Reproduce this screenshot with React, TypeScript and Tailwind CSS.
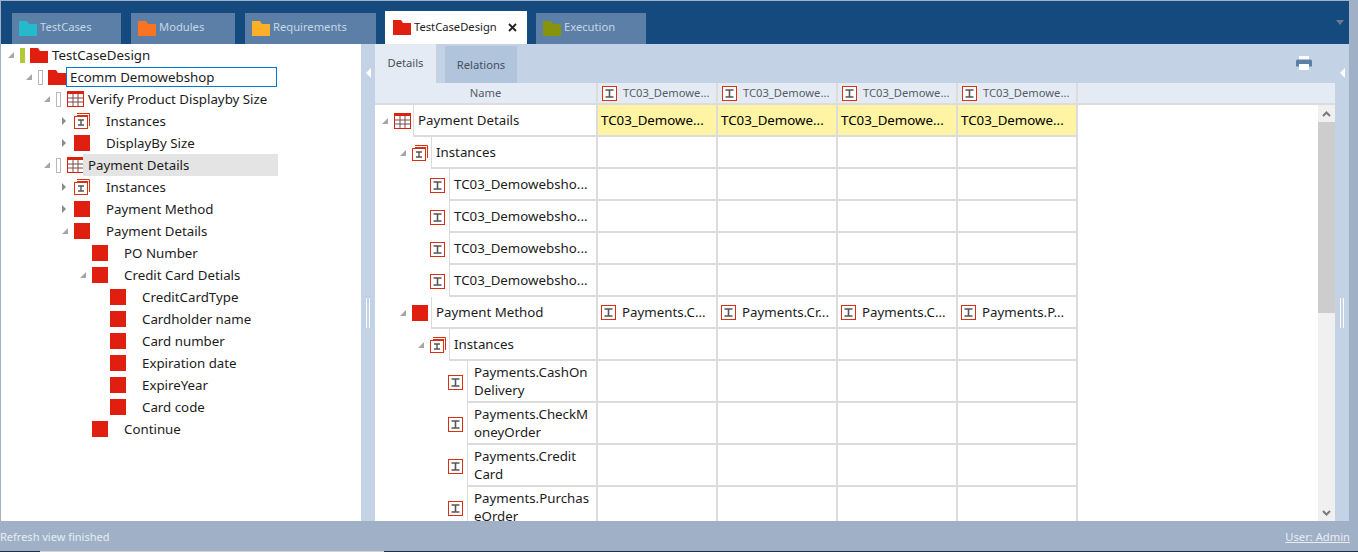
const FONT = "font-['Noto_Sans','Open_Sans',sans-serif]";

function Folder({ color }: { color: string }) {
  return (
    <svg width="18" height="15" viewBox="0 0 18 15" className="shrink-0">
      <path d="M0 0H8L10 3H18V15H0Z" fill={color} />
    </svg>
  );
}

function TableIcon() {
  return (
    <svg width="17" height="16" viewBox="0 0 17 16" className="shrink-0">
      <rect x="0.5" y="0.5" width="16" height="15" fill="#fff" stroke="#d9230f" />
      <rect x="0" y="0" width="17" height="3" fill="#d9230f" />
      <path d="M1 7H16M1 11H16M6 3V15M11 3V15" stroke="#7a4a48" strokeWidth="1" />
    </svg>
  );
}

function SingleIcon() {
  return (
    <svg width="15" height="15" viewBox="0 0 15 15" className="shrink-0">
      <rect x="0.5" y="0.5" width="14" height="14" fill="#fff" stroke="#d9300f" />
      <path d="M3.5 4H11.5M7.5 4V11M3.5 11H11.5" stroke="#555" strokeWidth="1.6" fill="none" />
    </svg>
  );
}

function InstancesIcon() {
  return (
    <svg width="16" height="16" viewBox="0 0 16 16" className="shrink-0">
      <path d="M3 0.5H15.5V13" stroke="#d9300f" fill="none" />
      <path d="M3 2.5H14V3" stroke="#d9300f" fill="none" />
      <rect x="0.5" y="3.5" width="13" height="12" fill="#fff" stroke="#d9300f" />
      <path d="M4 7H10M7 7V12M4 12H10" stroke="#555" strokeWidth="1.4" fill="none" />
    </svg>
  );
}

function Square() {
  return <div className="w-4 h-4 bg-[#e01f10] shrink-0"></div>;
}

function Open() {
  return (
    <svg width="6" height="6" viewBox="0 0 6 6" className="shrink-0">
      <path d="M6 0V6H0Z" fill="#a6a6a6" />
    </svg>
  );
}

function Closed() {
  return (
    <svg width="5" height="8" viewBox="0 0 5 8" className="shrink-0">
      <path d="M0 0L4 4L0 8Z" fill="#8c8c8c" />
    </svg>
  );
}

function Splitter() {
  return (
    <div className="w-[14px] shrink-0 bg-[#c3d2e5] flex flex-col items-center pt-[24px]">
      <svg width="5" height="10" viewBox="0 0 5 10">
        <path d="M5 0V10L0 5Z" fill="#fff" />
      </svg>
      <div className="mt-[220px] flex gap-[2px]">
        <div className="w-px h-[30px] bg-white"></div>
        <div className="w-px h-[30px] bg-white"></div>
      </div>
    </div>
  );
}

const tabs = [
  { label: "TestCases", color: "#25bacb", w: "w-[109px]" },
  { label: "Modules", color: "#f97320", w: "w-[104px]" },
  { label: "Requirements", color: "#fdb027", w: "w-[131px]" },
];

function TabBar() {
  return (
    <div className="h-[43px] bg-[#144a7e] flex items-end pl-[11px] relative text-[11.2px]">
      {tabs.map((t) => (
        <div key={t.label} className={`${t.w} h-[31px] mr-[10px] bg-[#5b7fa6] text-[#c8d6e6] flex items-center pl-[7px] gap-[3px]`}>
          <Folder color={t.color} />
          <span className="-mt-[2px]">{t.label}</span>
        </div>
      ))}
      <div className="w-[142px] h-[33px] mr-[9px] -ml-px bg-white text-[#222] flex items-center pl-[8px] gap-[3px]">
        <Folder color="#e01f10" />
        <span className="flex-1 -mt-[1px]">TestCaseDesign</span>
        <svg width="9" height="9" viewBox="0 0 9 9" className="mr-[10px]">
          <path d="M1 1L8 8M8 1L1 8" stroke="#222" strokeWidth="1.8" />
        </svg>
      </div>
      <div className="w-[110px] h-[31px] bg-[#5b7fa6] text-[#c8d6e6] flex items-center pl-[7px] gap-[3px]">
        <Folder color="#85930d" />
        <span className="-mt-[2px]">Execution</span>
      </div>
      <svg width="8" height="5" viewBox="0 0 8 5" className="absolute right-[5px] top-[19px]">
        <path d="M0 0H8L4 5Z" fill="#6d7b8b" />
      </svg>
    </div>
  );
}

function Tree() {
  const Row = ({ pl, open, bar, icon, label, selected }: { pl: string; open?: boolean; bar?: string; icon: React.ReactNode; label: string; selected?: boolean }) => (
    <div className={`h-[22px] flex items-center ${pl}`}>
      <div className="w-[44px] shrink-0 flex items-center">
        <div className="w-[12px] shrink-0 flex items-center justify-start">{open === undefined ? null : open ? <Open /> : <Closed />}</div>
        {bar ? <div className={`w-[5px] h-[15px] mr-[5px] shrink-0 ${bar}`}></div> : null}
        {icon}
      </div>
      <div className={`h-full flex items-center -ml-[5px] pl-[5px] pt-px ${selected ? "w-[195px] bg-[#e4e4e4]" : ""}`}>{label}</div>
    </div>
  );
  return (
    <div className="w-[360px] shrink-0 bg-white text-[13.3px] text-[#1c1c1c]">
      <Row pl="pl-[7px]" open bar="bg-[#b4c834]" icon={<Folder color="#e01f10" />} label="TestCaseDesign" />
      <div className="h-[22px] flex items-center pl-[25px] relative">
        <div className="w-[12px] shrink-0"><Open /></div>
        <div className="w-[5px] h-[15px] mr-[5px] border border-[#b8b8b8]"></div>
        <Folder color="#e01f10" />
        <input
          readOnly
          value="Ecomm Demowebshop"
          className="w-[211px] h-[20px] border border-[#0078d7] pl-[3px] outline-none bg-white"
        />
      </div>
      <Row pl="pl-[43px]" open bar="border border-[#b8b8b8]" icon={<div className="ml-px"><TableIcon /></div>} label="Verify Product Displayby Size" />
      <Row pl="pl-[61px]" open={false} icon={<InstancesIcon />} label="Instances" />
      <Row pl="pl-[61px]" open={false} icon={<Square />} label="DisplayBy Size" />
      <Row pl="pl-[43px]" open bar="border border-[#b8b8b8]" icon={<div className="ml-px"><TableIcon /></div>} label="Payment Details" selected />
      <Row pl="pl-[61px]" open={false} icon={<InstancesIcon />} label="Instances" />
      <Row pl="pl-[61px]" open={false} icon={<Square />} label="Payment Method" />
      <Row pl="pl-[61px]" open icon={<Square />} label="Payment Details" />
      <Row pl="pl-[79px]" icon={<Square />} label="PO Number" />
      <Row pl="pl-[79px]" open icon={<Square />} label="Credit Card Detials" />
      <Row pl="pl-[97px]" icon={<Square />} label="CreditCardType" />
      <Row pl="pl-[97px]" icon={<Square />} label="Cardholder name" />
      <Row pl="pl-[97px]" icon={<Square />} label="Card number" />
      <Row pl="pl-[97px]" icon={<Square />} label="Expiration date" />
      <Row pl="pl-[97px]" icon={<Square />} label="ExpireYear" />
      <Row pl="pl-[97px]" icon={<Square />} label="Card code" />
      <Row pl="pl-[79px]" icon={<Square />} label="Continue" />
    </div>
  );
}

const headCols = ["a", "b", "c", "d"];

function GridRow({
  pl,
  open,
  icon,
  label,
  h = "h-[32px]",
  textPl = "pl-[4px]",
  yellow,
  values,
}: {
  pl: string;
  open?: boolean;
  icon: React.ReactNode;
  label: React.ReactNode;
  h?: string;
  textPl?: string;
  yellow?: boolean;
  values?: string[];
}) {
  return (
    <div className={`flex ${h} shrink-0`}>
      <div className={`w-[221px] shrink-0 flex ${pl}`}>
        <div className="w-[12px] shrink-0 flex items-center">{open ? <Open /> : null}</div>
        <div className="w-[19px] shrink-0 flex items-center">{icon}</div>
        <div className={`flex-1 min-w-0 border-l border-b-2 border-[#dcdcdc] flex items-center ${textPl} pr-[4px] leading-[18px]`}>{label}</div>
      </div>
      {headCols.map((c, i) => (
        <div
          key={c}
          className={`w-[120px] shrink-0 border-l-2 border-b-2 last:border-r-2 last:w-[122px] border-[#dcdcdc] flex items-center min-w-0 ${yellow ? "pl-[3px] bg-[#fff4a3] text-black" : "pl-[3px] gap-[6px]"}`}
        >
          {values && !yellow ? <SingleIcon /> : null}
          {values ? <span className="whitespace-nowrap pt-px">{values[i]}</span> : null}
        </div>
      ))}
    </div>
  );
}

function Details() {
  const tc = "TC03_Demowe...";
  return (
    <div className="flex-1 min-w-0 flex flex-col bg-white text-[13.3px] text-[#1c1c1c]">
      <div className="h-[39px] bg-[#c3d2e5] flex items-end relative text-[#46505c] text-[11.2px]">
        <div className="w-[61px] h-[39px] bg-[#e4ebf4] flex items-center justify-center">Details</div>
        <div className="w-[72px] h-[37px] ml-[9px] bg-[#b0c5dc] flex items-center justify-center pt-px">Relations</div>
        <svg width="16" height="14" viewBox="0 0 16 14" className="absolute right-[23px] top-[12px]">
          <rect x="3" y="0" width="10" height="5" fill="#fff" />
          <path d="M1.5 3.5H14.5Q16 3.5 16 5V10.5H0V5Q0 3.5 1.5 3.5Z" fill="#5b7fa6" />
          <rect x="3" y="8" width="10" height="6" fill="#fff" />
        </svg>
      </div>
      <div className="h-[22px] shrink-0 flex bg-[#e4ebf4] border-b-2 border-[#dcdcdc] text-[11.2px] text-[#555e69]">
        <div className="w-[221px] shrink-0 flex items-center justify-center">Name</div>
        {headCols.map((c) => (
          <div key={c} className="w-[120px] last:w-[122px] last:border-r-2 shrink-0 border-l-2 border-[#dcdcdc] flex items-center gap-[6px] pl-[4px] min-w-0">
            <SingleIcon />
            <span className="whitespace-nowrap">{tc}</span>
          </div>
        ))}
      </div>
      <div className="flex-1 min-h-0 flex">
        <div className="flex-1 min-w-0 overflow-hidden">
          <GridRow pl="pl-[7px]" open icon={<TableIcon />} label="Payment Details" yellow values={[tc, tc, tc, tc]} />
          <GridRow pl="pl-[25px]" open icon={<InstancesIcon />} label="Instances" />
          {[0, 1, 2, 3].map((i) => (
            <GridRow key={i} pl="pl-[43px]" icon={<SingleIcon />} label="TC03_Demowebsho..." />
          ))}
          <GridRow
            pl="pl-[25px]"
            open
            icon={<Square />}
            label="Payment Method"
            values={["Payments.C...", "Payments.Cr...", "Payments.C...", "Payments.P..."]}
          />
          <GridRow pl="pl-[43px]" open icon={<InstancesIcon />} label="Instances" />
          <GridRow pl="pl-[61px]" h="h-[42px]" textPl="pl-[6px]" icon={<SingleIcon />} label={<span className="break-words min-w-0">Payments.CashOn Delivery</span>} />
          <GridRow pl="pl-[61px]" h="h-[42px]" textPl="pl-[6px]" icon={<SingleIcon />} label={<span className="break-all min-w-0">Payments.CheckMoneyOrder</span>} />
          <GridRow pl="pl-[61px]" h="h-[42px]" textPl="pl-[6px]" icon={<SingleIcon />} label={<span className="break-words min-w-0">Payments.Credit Card</span>} />
          <GridRow pl="pl-[61px]" h="h-[42px]" textPl="pl-[6px]" icon={<SingleIcon />} label={<span className="break-all min-w-0">Payments.PurchaseOrder</span>} />
        </div>
        <div className="w-[17px] shrink-0 bg-[#f0f0f0] flex flex-col relative">
          <div className="h-[17px] flex items-center justify-center">
            <svg width="9" height="6" viewBox="0 0 9 6"><path d="M1 5L4.5 1.5L8 5" stroke="#7a7a7a" strokeWidth="2" fill="none" /></svg>
          </div>
          <div className="h-[191px] bg-[#cdcdcd]"></div>
          <div className="flex-1"></div>
          <div className="h-[17px] flex items-center justify-center">
            <svg width="9" height="6" viewBox="0 0 9 6"><path d="M1 1L4.5 4.5L8 1" stroke="#7a7a7a" strokeWidth="2" fill="none" /></svg>
          </div>
        </div>
      </div>
    </div>
  );
}

export default function App() {
  return (
    <div className={`w-[1358px] h-[552px] overflow-hidden bg-[#a0b1c7] flex flex-col pt-px pl-px ${FONT}`}>
      <div className="h-[520px] shrink-0 mr-[9px] flex flex-col">
        <TabBar />
        <div className="flex-1 min-h-0 flex">
          <Tree />
          <Splitter />
          <Details />
          <Splitter />
        </div>
      </div>
      <div className="h-[30px] shrink-0 -ml-px flex items-center justify-between text-[11.2px] text-[#e6edf5] pr-[8px] pt-[3px]">
        <span className="text-[11px]">Refresh view finished</span>
        <span className="underline">User: Admin</span>
      </div>
      <div className="h-px shrink-0 -ml-px flex">
        <div className="w-[40px] bg-[#1d3246]"></div>
        <div className="w-[344px] bg-[#d4d4d4]"></div>
        <div className="flex-1 bg-[#1d3246]"></div>
      </div>
    </div>
  );
}
